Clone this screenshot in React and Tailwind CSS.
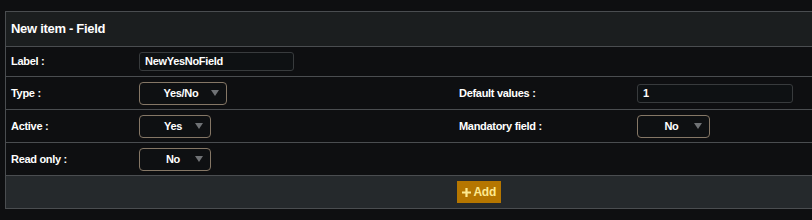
import React from "react";

const Select = ({ value, width }) => (
    <div
        className={`flex items-center h-[23px] ${width} border border-[#857766] rounded-[4px] bg-[#0e1012] pl-[17px] pr-[7px]`}
    >
        <span className="flex-1 text-center text-white font-bold text-[11px] tracking-[-0.3px]">{value}</span>
        <svg width="8" height="6" viewBox="0 0 8 6" className="ml-[6px]">
            <path d="M0 0 L8 0 L4 6 Z" fill="#6f7275" />
        </svg>
    </div>
);

const TextInput = ({ value, width }) => (
    <div
        className={`flex items-center h-[19px] ${width} border border-[#383b3d] rounded-[3px] bg-[#0e1113] px-[5px] text-white font-bold text-[11px] tracking-[-0.3px]`}
    >
        {value}
    </div>
);

const Label = ({ children }) => (
    <div className="pl-[5px] text-white font-bold text-[11px] tracking-[-0.3px]">{children}</div>
);

export default function App() {
    return (
        <div
            className="w-[812px] h-[220px] overflow-hidden bg-[#0e0f11]"
            style={{ fontFamily: '"Liberation Sans", Arial, sans-serif' }}
        >
            <div className="ml-[5px] mt-[11px] w-[946px] border-t border-l border-b border-[#4a4d50]">
                {/* header */}
                <div className="h-[35px] flex items-center pl-[5px] bg-[#1b1e1f] border-b border-[#4a4d50] text-white font-bold text-[13px] tracking-[-0.3px]">
                    New item - Field
                </div>

                {/* label row */}
                <div className="grid grid-cols-[128px_320px_178px_1fr] items-center h-[30px] border-b border-[#4a4d50]">
                    <Label>Label :</Label>
                    <div className="pl-[5px]">
                        <TextInput value="NewYesNoField" width="w-[155px]" />
                    </div>
                    <div />
                    <div />
                </div>

                {/* type row */}
                <div className="grid grid-cols-[128px_320px_178px_1fr] items-center h-[33px] border-b border-[#4a4d50]">
                    <Label>Type :</Label>
                    <div className="pl-[5px]">
                        <Select value="Yes/No" width="w-[88px]" />
                    </div>
                    <Label>Default values :</Label>
                    <div className="pl-[5px]">
                        <TextInput value="1" width="w-[156px]" />
                    </div>
                </div>

                {/* active row */}
                <div className="grid grid-cols-[128px_320px_178px_1fr] items-center h-[33px] border-b border-[#4a4d50]">
                    <Label>Active :</Label>
                    <div className="pl-[5px]">
                        <Select value="Yes" width="w-[72px]" />
                    </div>
                    <Label>Mandatory field :</Label>
                    <div className="pl-[5px]">
                        <Select value="No" width="w-[73px]" />
                    </div>
                </div>

                {/* read only row */}
                <div className="grid grid-cols-[128px_320px_178px_1fr] items-center h-[33px] border-b border-[#4a4d50]">
                    <Label>Read only :</Label>
                    <div className="pl-[5px]">
                        <Select value="No" width="w-[72px]" />
                    </div>
                    <div />
                    <div />
                </div>

                {/* footer */}
                <div className="h-[32px] bg-[#25292c] flex items-center justify-center">
                    <button className="flex items-center gap-[3px] h-[22px] w-[44px] pl-[5px] bg-[#b57600] text-[#fde98f] font-bold text-[12px] tracking-[-0.3px]">
                        <svg width="9" height="9" viewBox="0 0 9 9">
                            <path d="M4.5 0 V9 M0 4.5 H9" stroke="#fde98f" strokeWidth="2.2" />
                        </svg>
                        Add
                    </button>
                </div>
            </div>
        </div>
    );
}
